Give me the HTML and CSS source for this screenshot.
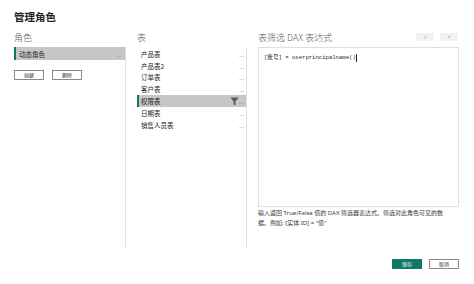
FILE: index.html
```html
<!DOCTYPE html>
<html lang="zh-CN">
<head>
<meta charset="utf-8">
<title>管理角色</title>
<link rel="stylesheet" href="styles.css">
</head>
<body>
<div class="dialog">
  <h1 class="title">管理角色</h1>
  <div class="columns">
    <section class="col col-roles">
      <h2 class="col-head">角色</h2>
      <div class="col-body">
        <div class="row selected"><span class="row-text">动态角色</span><span class="more">…</span></div>
        <div class="btn-row">
          <button class="btn">创建</button>
          <button class="btn">删除</button>
        </div>
      </div>
    </section>
    <section class="col col-tables">
      <h2 class="col-head">表</h2>
      <div class="col-body">
        <div class="list">
          <div class="row"><span class="row-text">产品表</span><span class="more">…</span></div>
          <div class="row"><span class="row-text">产品表2</span><span class="more">…</span></div>
          <div class="row"><span class="row-text">订单表</span><span class="more">…</span></div>
          <div class="row"><span class="row-text">客户表</span><span class="more">…</span></div>
          <div class="row selected"><span class="row-text">权限表</span>
            <svg class="filter" width="9" height="9" viewBox="0 0 9 9"><path d="M0.3 0.6 H8.7 L5.5 4.5 V8.6 L3.5 7.5 V4.5 Z" fill="#605e5c"/></svg>
            <span class="more">…</span></div>
          <div class="row"><span class="row-text">日期表</span><span class="more">…</span></div>
          <div class="row"><span class="row-text">销售人员表</span><span class="more">…</span></div>
        </div>
      </div>
    </section>
    <section class="col col-dax">
      <div class="dax-head">
        <h2 class="col-head">表筛选 DAX 表达式</h2>
        <div class="icon-btns">
          <span class="icon-btn">✓</span>
          <span class="icon-btn">×</span>
        </div>
      </div>
      <div class="editor"><span class="code">[账号] = userprincipalname()</span><span class="caret"></span></div>
      <p class="help">输入返回 True/False 值的 DAX 筛选器表达式。筛选对此角色可见的数据。例如: [实体 ID] = "值"</p>
    </section>
  </div>
  <div class="footer">
    <button class="btn primary">保存</button>
    <button class="btn cancel">取消</button>
  </div>
</div>
</body>
</html>
```

FILE: styles.css
```css
* { box-sizing: border-box; }
html, body { margin: 0; padding: 0; background: #ffffff; }
body {
  width: 474px;
  height: 284px;
  overflow: hidden;
  font-family: "Noto Sans", "Noto Sans CJK SC", sans-serif;
  color: #252423;
}
.dialog { padding: 10px 15px 0 14px; }
.title {
  margin: 0;
  font-size: 10.5px;
  line-height: 14px;
  font-weight: 700;
  font-family: "Noto Sans CJK SC", sans-serif;
}
.columns { display: flex; margin-top: 7px; }
.col-head {
  margin: 0 0 3px 0;
  font-size: 9px;
  line-height: 13px;
  font-weight: 300;
  color: #605e5c;
  font-family: "Noto Sans CJK SC", "Noto Sans", sans-serif;
}
.col-body { height: 200px; border-right: 1px solid #e1dfdd; }
.col-roles { width: 112px; }
.col-tables { width: 121px; padding-left: 11px; }
.col-dax { width: 212px; padding-left: 11px; }

.row {
  display: flex;
  align-items: center;
  height: 13px;
  padding-left: 3px;
  padding-right: 3px;
  font-size: 6.5px;
  border-left: 2px solid transparent;
  font-family: "Noto Sans CJK SC", sans-serif;
}
.row-text { flex: 1; }
.row.selected { background: #c8c6c4; border-left-color: #117865; }
.more { color: #8a8886; font-size: 5px; line-height: 5px; padding-top: 3px; }
.filter { margin-right: 0; }
.list { padding-top: 1px; }
.list .row { height: 11.8px; padding-left: 2px; padding-right: 2px; }

.btn-row { display: flex; gap: 8px; margin-top: 10px; }
.btn {
  width: 30px;
  height: 10px;
  padding: 0;
  border: 1px solid #8a8886;
  background: #ffffff;
  color: #252423;
  font-size: 5px;
  line-height: 8px;
  font-family: "Noto Sans CJK SC", sans-serif;
  border-radius: 0;
}

.dax-head { display: flex; justify-content: space-between; align-items: flex-start; }
.icon-btns { display: flex; gap: 6px; padding-top: 2px; margin-right: 1px; }
.icon-btn {
  width: 18px;
  height: 8px;
  background: #f3f2f1;
  color: #a19f9d;
  font-size: 5px;
  line-height: 8px;
  text-align: center;
}
.editor {
  width: 201px;
  height: 160px;
  border: 1px solid #e1dfdd;
  padding: 6px 5px;
  display: flex;
  align-items: flex-start;
  font-family: "Liberation Mono", "Noto Sans CJK SC", monospace;
  font-size: 5.6px;
  line-height: 8px;
  color: #252423;
}
.caret { display: inline-block; width: 1px; height: 8px; background: #252423; margin-left: 0.5px; }
.help {
  margin: 2px 0 0 0;
  width: 192px;
  font-size: 6px;
  line-height: 9.5px;
  color: #3b3a39;
  font-family: "Noto Sans", "Noto Sans CJK SC", sans-serif;
}
.footer { display: flex; justify-content: flex-end; gap: 7px; margin-top: 12px; }
.btn.primary { background: #117865; border-color: #117865; color: #ffffff; }
```
